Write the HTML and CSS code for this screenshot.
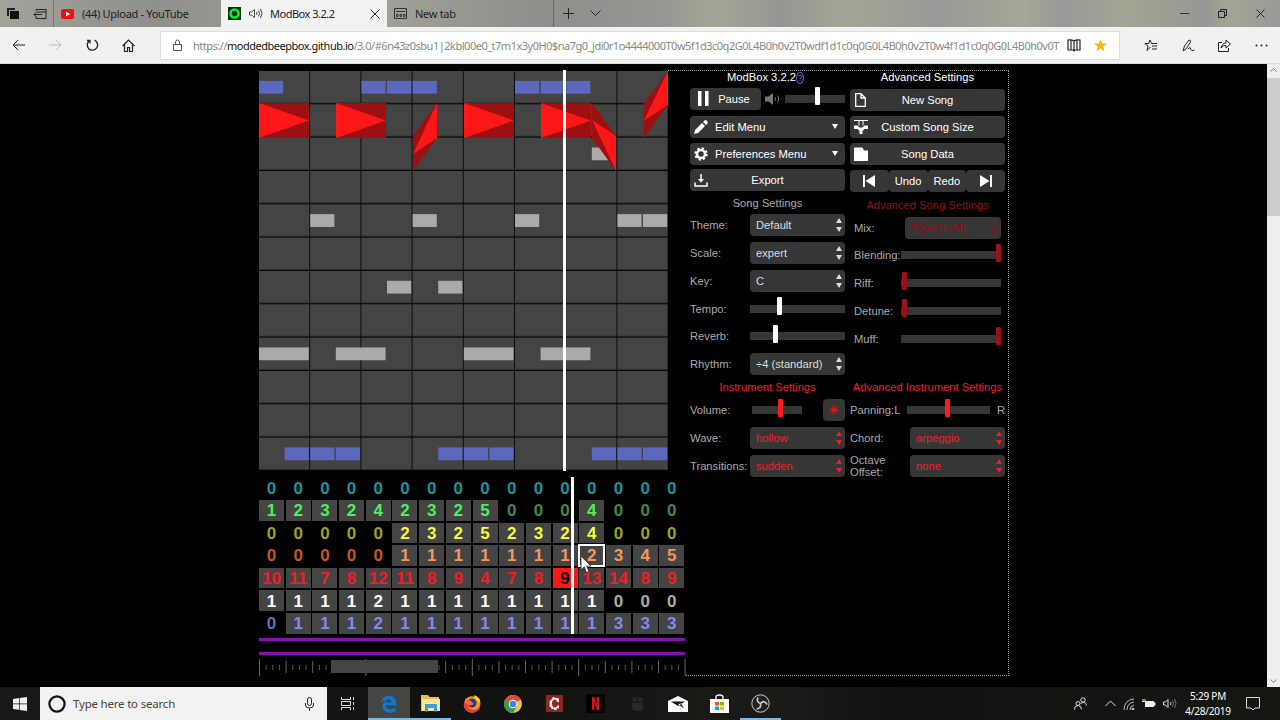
FILE: index.html
```html
<!DOCTYPE html>
<html lang="en">
  <head>
    <meta charset="UTF-8" />
    <meta name="viewport" content="width=device-width, initial-scale=1.0" />
    <title>ModBox 3.2.2</title>
    <link rel="stylesheet" href="styles.css">
  </head>

  <body>
    <header class="tabs">
      <div class="tab-tools">
        <svg width="14" height="14" viewBox="0 0 14 14"><path d="M1 1h8v2H3v6H1z" fill="#222"/><path d="M4 4h9v8H4z" fill="#111"/></svg>
        <svg width="14" height="12" viewBox="0 0 14 12" fill="none" stroke="#222"><path d="M3 3V1.500h10v9H3V9M4 4h9M9 6.500H1M3.500 4L1 6.500 3.500 9"/></svg>
      </div>
      <div class="tab">
        <svg width="13" height="10" viewBox="0 0 13 10"><rect width="13" height="10" rx="2" fill="#e11"/><path d="M5 2.500l4 2.500-4 2.500z" fill="#fff"/></svg>
        <span class="tab-name">(44) Upload - YouTube</span>
      </div>
      <div class="tab current">
        <svg width="13" height="13" viewBox="0 0 13 13"><rect width="13" height="13" fill="#031"/><circle cx="6.500" cy="6.500" r="4" fill="none" stroke="#1bea2b" stroke-width="2.600"/></svg>
        <svg class="sound" width="14" height="11" viewBox="0 0 14 11" fill="none" stroke="#333" stroke-width=".9"><path d="M.5 4v3h2L5.500 9.500v-8L2.500 4zM7.500 4q1 1.500 0 3M9.500 2.500q2 3 0 6M11.500 1q3 4.500 0 9"/></svg>
        <span class="tab-name modbox">ModBox 3.2.2</span>
        <svg class="close" width="10" height="10" viewBox="0 0 10 10" stroke="#333"><path d="M.5.5l9 9M9.500.5l-9 9"/></svg>
      </div>
      <div class="tab last">
        <svg width="13" height="11" viewBox="0 0 13 11" fill="none" stroke="#333"><path d="M.5 10.500V.5h12v10zM2 3.500h9M2.500 6.500h1.500v2H2.500zM6 6.500h1.500v2H6zM9.500 6.500H11v2H9.500z"/></svg>
        <span class="tab-name">New tab</span>
      </div>
      <svg class="plus" width="11" height="11" viewBox="0 0 11 11" stroke="#222"><path d="M5.500 0v11M0 5.500h11"/></svg>
      <svg class="more" width="11" height="7" viewBox="0 0 11 7" fill="none" stroke="#222"><path d="M.5.5l5 5 5-5"/></svg>
      <div class="window-buttons">
        <svg width="9" height="9" viewBox="0 0 9 9" stroke="#333"><path d="M0 4.500h9"/></svg>
        <svg width="9" height="9" viewBox="0 0 9 9" fill="none" stroke="#222"><path d="M.5 2.500h6v6h-6zM2.500 2V.5h6v6H7"/></svg>
        <svg width="9" height="9" viewBox="0 0 9 9" stroke="#222"><path d="M.5.5l8 8M8.500.5l-8 8"/></svg>
      </div>
    </header>

    <nav class="toolbar">
      <svg class="back" width="13" height="12" viewBox="0 0 13 12" fill="none" stroke="#222"><path d="M13 6H1M6 1L1 6l5 5"/></svg>
      <svg class="forward" width="13" height="12" viewBox="0 0 13 12" fill="none" stroke="#bbb"><path d="M0 6h12M7 1l5 5-5 5"/></svg>
      <svg class="refresh" width="13" height="14" viewBox="0 0 13 14" fill="none" stroke="#222" stroke-width="1.300"><path d="M8.500 2.200A5.200 5.200 0 1 1 3.500 2.700M1 2.500h3v3"/></svg>
      <svg class="home" width="13" height="13" viewBox="0 0 13 13" fill="none" stroke="#222" stroke-width="1.200"><path d="M.5 7l6-6 6 6M2.500 5.500v7h3v-4h2v4h3v-7"/></svg>
      <div class="address">
        <svg width="9" height="12" viewBox="0 0 9 12" fill="none" stroke="#555"><path d="M.5 5.500h8v6h-8zM2.500 5.500V3a2 2 0 0 1 4 0v2.500"/></svg>
        <span class="url">https://<b>moddedbeepbox.github.io</b>/3.0/#6n43z0sbu1|2kbl00e0_t7m1x3y0H0$na7g0_jdi0r1o4444000T0w5f1d3c0q2G0L4B0h0v2T0wdf1d1c0q0G0L4B0h0v2T0w4f1d1c0q0G0L4B0h0v0T</span>
        <svg class="book" width="14" height="13" viewBox="0 0 14 13" fill="none" stroke="#222" stroke-width="1.200"><path d="M7 2v10M7 2Q5 .5 1 1v10h5l1 1 1-1h5V1Q9 .5 7 2M4 1v10M10 1v10"/></svg>
        <svg width="13" height="13" viewBox="0 0 13 13"><path d="M6.500 0l1.700 4.600H13L9.200 7.500l1.400 5-4.100-3-4.100 3 1.400-5L0 4.600h4.800z" fill="#f7b614"/></svg>
      </div>
      <div class="actions">
        <svg width="14" height="13" viewBox="0 0 14 13" fill="none" stroke="#222"><path d="M6.500 8L3 11.500l1-4.500L.8 4.500h3.900L6 1l1.500 3.500H13M8 7h5M8 10h5"/></svg>
        <svg width="13" height="13" viewBox="0 0 13 13" fill="none" stroke="#222"><path d="M1 12l1.500-5L7 1q2 0 1.500 2L4 10l-3 2M6 10q3-3 2.500 0 1 3 4 1"/></svg>
        <svg width="13" height="13" viewBox="0 0 13 13" fill="none" stroke="#222"><path d="M4 3.500H.5v9h10V9M3 9q1-5 5-5V1l4.500 4L8 9V6.500Q5 6 3 9z"/></svg>
        <svg width="13" height="13" viewBox="0 0 13 13" fill="#222"><circle cx="1.500" cy="6.500" r="1"/><circle cx="6.500" cy="6.500" r="1"/><circle cx="11.500" cy="6.500" r="1"/></svg>
      </div>
    </nav>

    <main class="page">
      <section class="editor">
        <div class="pattern">
          <svg width="410" height="400" viewBox="0 0 410 400">
            <defs>
              <pattern id="cell" width="51.200" height="33.330" patternUnits="userSpaceOnUse">
                <rect width="50.300" height="32" fill="#444"/>
              </pattern>
            </defs>
            <rect width="409" height="399" fill="#050505"/>
            <rect width="409" height="399" fill="url(#cell)"/>
            <g id="notes"></g>
            <g fill="#9b1010">
              <path d="M0 32h50v35H0zM77 32h50v35H77zM205 32h50v35h-50zM282 32h50v35h-50zM154 65l24-33v35l-24 33zM333 32l24 33v35l-24-33zM384.500 33L409 0v34l-24.500 33z"/>
            </g>
            <g fill="#ff1616">
              <path d="M0 32l50 17.500L0 67zM77 32l50 17.500L77 67zM205 32l50 17.500L205 67zM282 32l50 17.500L282 67zM154 83l24-51v35zM333 49l24 16v35zM384.500 50L409 0v34z"/>
            </g>
          </svg>
          <div class="playhead"></div>
        </div>

        <div class="tracks">
          <div class="cells" id="cells"></div>
          <div class="playhead"></div>
          <svg class="cursor" width="13" height="19" viewBox="0 0 13 19"><path d="M1 1v14l3.200-3 2.300 5.500 2.500-1-2.300-5.300H11z" fill="#fff" stroke="#222" stroke-width=".8"/></svg>
        </div>
        <div class="loop"></div>
        <svg class="timeline" id="timeline" width="427" height="20" viewBox="0 0 427 20"></svg>
      </section>

      <section class="settings">
        <div class="column">
          <div class="song">
            <h2 class="title">ModBox 3.2.2<span class="help">?</span></h2>
            <div class="row play">
              <button class="pause"><svg width="11" height="15" viewBox="0 0 11 15" fill="#fff"><path d="M0 0h3.500v15H0zM7 0h3.500v15H7z"/></svg>Pause</button>
              <svg width="16" height="12" viewBox="0 0 16 12"><path d="M0 3.500h3.500L8 0v12L3.500 8.500H0z" fill="#777"/><path d="M10 4q1 2 0 4M12.500 2.500q2.500 3.500 0 7" fill="none" stroke="#777"/></svg>
              <div class="slider white" style="--pos: 54%"></div>
            </div>
            <div class="row menu"><button class="left"><svg width="14" height="14" viewBox="0 0 14 14" fill="#fff"><path d="M0 14l1-4 7-7 3 3-7 7zM9 2l1.500-1.500q1-.8 2 0l1 1q.8 1 0 2L12 5z"/></svg>Edit Menu<i class="drop"></i></button></div>
            <div class="row menu"><button class="left"><svg width="14" height="14" viewBox="0 0 14 14" fill="none" stroke="#fff"><circle cx="7" cy="7" r="4" stroke-width="2.500"/><circle cx="7" cy="7" r="5.600" stroke-width="2.200" stroke-dasharray="2.200 2.200"/></svg>Preferences Menu<i class="drop"></i></button></div>
            <div class="row menu"><button><svg width="14" height="13" viewBox="0 0 14 13" fill="none" stroke="#fff" stroke-width="1.500"><path d="M1 8.500V12h12V8.500M7 0v7"/><path d="M4 5h6L7 8.500z" fill="#fff" stroke="none"/></svg>Export</button></div>
            <h2 class="heading">Song Settings</h2>
            <div class="row"><label>Theme:</label><div class="select">Default</div></div>
            <div class="row"><label>Scale:</label><div class="select">expert</div></div>
            <div class="row"><label>Key:</label><div class="select">C</div></div>
            <div class="row"><label>Tempo:</label><div class="slider white" style="--pos: 31%"></div></div>
            <div class="row"><label>Reverb:</label><div class="slider white" style="--pos: 27%"></div></div>
            <div class="row"><label>Rhythm:</label><div class="select">÷4 (standard)</div></div>
          </div>
          <div class="instrument">
            <h2 class="heading">Instrument Settings</h2>
            <div class="row volume"><label>Volume:</label><div class="slider" style="--pos: 57%"></div><button class="record"><svg width="10" height="10" viewBox="0 0 10 10" fill="none" stroke="#e11"><circle cx="5" cy="5" r="3.800" stroke-dasharray="2 .8"/><circle cx="5" cy="5" r="2.200" fill="#e11"/></svg></button></div>
            <div class="row"><label>Wave:</label><div class="select">hollow</div></div>
            <div class="row"><label>Transitions:</label><div class="select">sudden</div></div>
          </div>
        </div>

        <div class="column advanced">
          <div class="song">
            <h2 class="title">Advanced Settings</h2>
            <div class="row menu"><button><svg class="file" width="11" height="14" viewBox="0 0 11 14" fill="none" stroke="#fff" stroke-width="1.300"><path d="M.7.7H6L10.300 5v8.300H.7zM6 1v4h4"/></svg>New Song</button></div>
            <div class="row menu"><button><svg width="14" height="14" viewBox="0 0 14 14" fill="#fff"><path d="M0 0h14v1H0zM4.500 1h1v4.500h-1zM8.500 1h1v4.500h-1zM0 5.500h3.500l2 2h3l2-2H14V9h-3.500L8.500 11v3h-3v-3l-2-2H0z"/></svg>Custom Song Size</button></div>
            <div class="row menu"><button><svg width="14" height="14" viewBox="0 0 14 14" fill="#fff"><path d="M0 .5h8.500L10 3.500h4V14H0z"/></svg>Song Data</button></div>
            <div class="row nav">
              <button><svg width="12" height="12" viewBox="0 0 12 12" fill="#fff"><path d="M0 0h2v12H0zM12 0v12L2.500 6z"/></svg></button>
              <button>Undo</button>
              <button>Redo</button>
              <button><svg width="12" height="12" viewBox="0 0 12 12" fill="#fff"><path d="M10 0h2v12h-2zM0 0v12l9.500-6z"/></svg></button>
            </div>
            <h2 class="heading">Advanced Song Settings</h2>
            <div class="mods">
              <div class="row"><label>Mix:</label><div class="select">Type B (M)</div></div>
              <div class="row"><label>Blending:</label><div class="slider" style="--pos: 97%"></div></div>
              <div class="row"><label>Riff:</label><div class="slider" style="--pos: 3%"></div></div>
              <div class="row"><label>Detune:</label><div class="slider" style="--pos: 3%"></div></div>
              <div class="row"><label>Muff:</label><div class="slider" style="--pos: 97%"></div></div>
            </div>
          </div>
          <div class="instrument">
            <h2 class="heading">Advanced Instrument Settings</h2>
            <div class="row panning"><label>Panning:L</label><div class="slider" style="--pos: 49%"></div><label>R</label></div>
            <div class="row"><label>Chord:</label><div class="select">arpeggio</div></div>
            <div class="row"><label>Octave Offset:</label><div class="select">none</div></div>
          </div>
        </div>
      </section>

      <div class="scrollbar">
        <svg width="7" height="4" viewBox="0 0 7 4" fill="none" stroke="#777"><path d="M.5 3.500l3-3 3 3"/></svg>
        <div class="scroll-thumb"></div>
        <svg width="7" height="4" viewBox="0 0 7 4" fill="none" stroke="#777"><path d="M.5.5l3 3 3-3"/></svg>
      </div>
    </main>

    <footer class="taskbar">
      <div class="start"><svg width="14" height="14" viewBox="0 0 14 14" fill="#eee"><path d="M0 2l6-.9v5.500H0zM6.700 1L14 0v6.600H6.700zM0 7.300h6v5.500L0 12zM6.700 7.300H14V14l-7.300-1z"/></svg></div>
      <div class="search">
        <svg width="18" height="18" viewBox="0 0 18 18"><circle cx="9" cy="9" r="7.600" fill="none" stroke="#111" stroke-width="2.200"/></svg>
        <span>Type here to search</span>
        <svg width="9" height="14" viewBox="0 0 9 14" fill="none" stroke="#222"><rect x="2.500" y=".5" width="4" height="8" rx="2"/><path d="M.5 6v2q0 3 4 3t4-3V6M4.500 11v3"/></svg>
      </div>
      <div class="apps">
        <div class="app"><svg width="14" height="13" viewBox="0 0 14 13" fill="none" stroke="#ddd"><path d="M.5 0v2.500h9V0M.5 4.500h9v4h-9zM.5 13v-2.500h9V13M12.500 0v3M12.500 5v3M12.500 10v3"/></svg></div>
        <div class="app active"><svg width="17" height="18" viewBox="0 0 17 18"><path d="M1 8Q2 1 9 .7q7 0 7.500 9.500H5.500q.4 4 5 4 2.700 0 5-1.400v3.500Q13 18 9.500 17.700 3 17 2.500 11 3 7 6.500 5 3 5 1 8zM5.800 7.500h5.500q0-3.200-2.700-3.200T5.800 7.500z" fill="#0b7bd8"/></svg></div>
        <div class="app open"><svg width="19" height="17" viewBox="0 0 19 17"><path d="M0 0h7l1.500 2H18v14H0z" fill="#e9bd51"/><path d="M1 4h18v12H1z" fill="#ffe38f"/><path d="M4 9h12v7.500h-3V13H7v3.500H4z" fill="#37a3dd"/></svg></div>
        <div class="app"><svg width="18" height="18" viewBox="0 0 18 18"><circle cx="9" cy="9.500" r="8.200" fill="#ff9718"/><path d="M1 7Q0 17 9 17.700q8-.7 8.500-8-3 5.500-7.500 5Q4 14 4.500 9z" fill="#f33149"/><circle cx="9" cy="8" r="4.500" fill="#173d9a"/><path d="M2 3q3 3 6 3l3 3-4 2Q2 9 2 3z" fill="#ff6723"/><path d="M11 0q7 2 6.500 10-1-4-4-5Q11 3 11 0z" fill="#ffd43b"/></svg></div>
        <div class="app"><svg width="18" height="18" viewBox="0 0 18 18"><circle cx="9" cy="9" r="9" fill="#eac33c"/><path d="M9 9L1.200 4.500a9 9 0 0 1 15.600 0z" fill="#dd493b"/><path d="M9 9L1.200 4.500A9 9 0 0 0 9 18l4-7z" fill="#399b50"/><circle cx="9" cy="9" r="4.300" fill="#fff"/><circle cx="9" cy="9" r="3.300" fill="#4381e8"/></svg></div>
        <div class="app"><svg width="17" height="17" viewBox="0 0 17 17"><rect width="17" height="17" fill="#8d2622"/><path d="M13 3.500V7h-2q0-2.500-2-2.500-3 0-3 4t3 4q2 0 2-2h2v3l-2-.5-.5 2H8l-.3-1.300-2 .5-.9-2-1.500-1 .5-2.200-.5-1.500.8-2 1.500-1L7 2l2 .7z" fill="#eee"/></svg></div>
        <div class="app"><svg width="19" height="19" viewBox="0 0 19 19"><rect width="19" height="19" fill="#030303"/><path d="M6 3h2.500l2.200 8V3H13v13h-2.300L8.300 8.500V16H6z" fill="#d4101c"/></svg></div>
        <div class="app"><svg width="14" height="16" viewBox="0 0 14 16"><rect x="2" y="1" width="11" height="14" rx="4" fill="#292929"/><path d="M2 6h11M7.500 1v5" stroke="#111"/></svg></div>
        <div class="app"><svg width="20" height="16" viewBox="0 0 20 16"><path d="M0 5l10-5 10 5v11H0z" fill="#fff"/><path d="M3 5.500h14l-7 4.500zM10 8l6 4.500-3-5z" fill="#111"/></svg></div>
        <div class="app"><svg width="19" height="19" viewBox="0 0 19 19"><path d="M0 5h19v14H0z" fill="#fff"/><path d="M6 6V3q0-2 3.500-2T13 3v3" fill="none" stroke="#fff" stroke-width="1.300"/><path d="M5 8h4v3.500H5z" fill="#f25022"/><path d="M10 8h4v3.500h-4z" fill="#7fba00"/><path d="M5 12.500h4V16H5z" fill="#00a4ef"/><path d="M10 12.500h4V16h-4z" fill="#ffb900"/></svg></div>
        <div class="app open"><svg width="19" height="19" viewBox="0 0 19 19" fill="none" stroke="#ccc"><circle cx="9.500" cy="9.500" r="8.700" fill="#222"/><path d="M9.500 9.500Q5 8 7 3.500M9.500 9.500q4-4 6.500 1M9.500 9.500q1 5-4 5.500" stroke-width="1.700"/></svg></div>
      </div>
      <div class="tray">
        <svg width="13" height="13" viewBox="0 0 13 13" fill="none" stroke="#ddd"><circle cx="9" cy="3" r="2.200"/><circle cx="4" cy="6.500" r="2"/><path d="M.5 12.500q0-4 3.500-4t3.500 4M6.500 6.500q5-3 6 2"/></svg>
        <svg width="11" height="7" viewBox="0 0 11 7" fill="none" stroke="#ddd"><path d="M.5 6l5-5 5 5"/></svg>
        <svg width="12" height="12" viewBox="0 0 12 12" fill="none" stroke="#bbb"><path d="M1 12Q1 2 11 1M4 12q0-7 7-8M7 12q0-4 4-5"/><circle cx="10" cy="11" r="1" fill="#ddd"/></svg>
        <svg width="14" height="11" viewBox="0 0 14 11"><path d="M3 3h9v1.500h1.500v3H12V9H3z" fill="#eee"/><path d="M1 1v2M3 1v2M0 3.500h4" stroke="#ddd"/></svg>
        <svg width="14" height="11" viewBox="0 0 14 11" fill="none" stroke="#ddd"><path d="M.5 4v3h2L5 9.500v-8L2.500 4zM7.500 4q1 1.500 0 3"/><path d="M9.500 2.500q2 3 0 6M11.500 1q3 4.500 0 9" stroke="#777"/></svg>
      </div>
      <div class="clock"><span>5:29 PM</span><span>4/28/2019</span></div>
      <svg class="notice" width="14" height="14" viewBox="0 0 14 14" fill="none" stroke="#ddd"><path d="M.5.5h13v10.500H9l-2 2-2-2H.5z"/></svg>
    </footer>

    <script>
      const SVG = "http://www.w3.org/2000/svg";
      const STEP = 25.6;
      const PITCH = 33.33;

      // [row, step, length in steps, kind]
      const NOTES = [
        [0, 0, 1, "drum"], [0, 4, 1, "drum"], [0, 5, 1, "drum"], [0, 6, 1, "drum"],
        [0, 10, 1, "drum"], [0, 11, 1, "drum"], [0, 12, 1, "drum"],
        [2, 13, 1, "ghost"],
        [4, 2, 1, "ghost"], [4, 6, 1, "ghost"], [4, 10, 1, "ghost"], [4, 14, 1, "ghost"], [4, 15, 1, "ghost"],
        [6, 5, 1, "ghost"], [6, 7, 1, "ghost"],
        [8, 0, 2, "ghost"], [8, 3, 2, "ghost"], [8, 8, 2, "ghost"], [8, 11, 2, "ghost"],
        [11, 1, 1, "drum"], [11, 2, 1, "drum"], [11, 3, 1, "drum"],
        [11, 7, 1, "drum"], [11, 8, 1, "drum"], [11, 9, 1, "drum"],
        [11, 13, 1, "drum"], [11, 14, 1, "drum"], [11, 15, 1, "drum"],
      ];

      const TRACKS = [
        ["cyan", "0 0 0 0 0 0 0 0 0 0 0 0 0 0 0 0"],
        ["green", "1 2 3 2 4 2 3 2 5 0 0 0 4 0 0 0"],
        ["yellow", "0 0 0 0 0 2 3 2 5 2 3 2 4 0 0 0"],
        ["orange", "0 0 0 0 0 1 1 1 1 1 1 1 2 3 4 5"],
        ["red", "10 11 7 8 12 11 8 9 4 7 8 9 13 14 8 9"],
        ["gray", "1 1 1 1 2 1 1 1 1 1 1 1 1 0 0 0"],
        ["blue", "0 1 1 1 2 1 1 1 1 1 1 1 1 3 3 3"],
      ];

      function addRect(parent, x, y, width, height, className) {
        const rect = document.createElementNS(SVG, "rect");
        rect.setAttribute("x", x);
        rect.setAttribute("y", y);
        rect.setAttribute("width", width);
        rect.setAttribute("height", height);
        rect.setAttribute("class", className);
        parent.appendChild(rect);
      }

      const notes = document.getElementById("notes");
      NOTES.forEach(([row, step, length, kind]) => {
        addRect(notes, step * STEP, row * PITCH + 9.8, length * STEP - 1.4, 12.8, kind);
      });

      const cells = document.getElementById("cells");
      TRACKS.forEach(([color, bars], channel) => {
        bars.split(" ").forEach((value, bar) => {
          const cell = document.createElement("div");
          cell.className = "cell " + color;
          if (value === "0") cell.classList.add("empty");
          if (channel === 4 && bar === 11) cell.classList.add("selected");
          if (channel === 3 && bar === 12) cell.classList.add("hover");
          cell.textContent = value;
          cells.appendChild(cell);
        });
      });

      const timeline = document.getElementById("timeline");
      for (let i = 0; i <= 64; i++) {
        const x = i * 6.65;
        if (i % 16 === 0) addRect(timeline, x, 1, 1, 17, "tick");
        else if (i % 4 === 0) addRect(timeline, x, 3, 1, 12, "tick");
        else addRect(timeline, x, 7, 1, 5, "tick small");
      }
      addRect(timeline, 72, 2, 107, 13, "visible-bars");
    </script>
  </body>
</html>
```
FILE: styles.css
```css
* {
  box-sizing: border-box;
}

body {
  margin: 0;
  width: 1280px;
  height: 720px;
  overflow: hidden;
  display: flex;
  flex-direction: column;
  background: #000;
  font-family: "Liberation Sans", Arial, sans-serif;
  font-size: 11.2px;
}

svg {
  flex: none;
  display: block;
}

/* browser */

.tabs {
  height: 27px;
  display: flex;
  align-items: center;
  background: linear-gradient(90deg, #a3a39a, #8f8f8c 12%, #a4a59a 27%, #8e8e8b 43%, #999794 52%, #a4a695 56%, #979593 61%, #a4a695 66%, #9a9896 73%, #a5a797 80%, #9a9896 83%, #a3a593 88%, #989694 94%, #a3a495 96%, #9a9896);
  font-family: "Noto Sans", "Open Sans", sans-serif;
  font-size: 11px;
  color: #222;
}

.tab-tools {
  width: 54px;
  height: 100%;
  padding-left: 6px;
  display: flex;
  align-items: center;
  gap: 13px;
  border-right: 1px solid #777;
}

.tab {
  width: 167px;
  height: 100%;
  padding: 0 7px;
  display: flex;
  align-items: center;
  gap: 8px;
}

.tab.current {
  width: 166px;
  background: #f2f2f2;
}

.tab.last {
  border-right: 1px solid #666;
}

.tab-name {
  white-space: nowrap;
  letter-spacing: -0.3px;
}

.modbox {
  letter-spacing: -0.5px;
}

.sound {
  margin-right: -1px;
}

.close {
  margin-left: auto;
}

.plus {
  margin-left: 9px;
}

.more {
  margin-left: 16px;
}

.window-buttons {
  margin-left: auto;
  margin-right: 15px;
  display: flex;
  gap: 29px;
}

.toolbar {
  height: 37px;
  display: flex;
  align-items: center;
  background: #f1f1f1;
  border-bottom: 1px solid #ddd;
}

.back {
  margin-left: 12px;
}

.forward {
  margin-left: 24px;
}

.refresh {
  margin-left: 24px;
}

.home {
  margin-left: 23px;
}

.address {
  width: 960px;
  height: 29px;
  margin-left: 25px;
  padding: 0 12px;
  display: flex;
  align-items: center;
  background: #fff;
  border: 1px solid #ddd;
}

.url {
  width: 867px;
  margin-left: 11px;
  white-space: nowrap;
  font-family: "Noto Sans", "Open Sans", sans-serif;
  font-size: 11px;
  letter-spacing: -0.49px;
  color: #888;
}

.url b {
  font-weight: normal;
  color: #111;
}

.book {
  margin: 0 13px 0 7px;
}

.actions {
  margin-left: 24px;
  display: flex;
  gap: 23.5px;
}

/* page */

.page {
  height: 623px;
  padding: 6px 0 0 259px;
  display: flex;
  background: #000;
}

.editor {
  width: 409px;
  padding-top: 1px;
  z-index: 1;
}

.pattern {
  position: relative;
  height: 400px;
}

.playhead {
  position: absolute;
  width: 3px;
  background: #fff;
}

.pattern .playhead {
  left: 304px;
  top: -1px;
  height: 401px;
}

.drum {
  fill: #5b68bd;
}

.ghost {
  fill: #aaa;
}

.tracks {
  position: relative;
  width: 427px;
  margin-top: 6.5px;
}

.cells {
  display: grid;
  grid-template-columns: repeat(16, 25px);
  grid-auto-rows: 20.6px;
  column-gap: 1.7px;
  row-gap: 2px;
}

.cell {
  display: flex;
  align-items: center;
  justify-content: center;
  padding-top: 1.6px;
  background: #444;
  font-size: 17px;
  font-weight: bold;
}

.cell.empty {
  background: none;
}

.cyan { color: #1c949b; }
.green { color: #50ef5b; }
.green.empty { color: #408944; }
.yellow { color: #f8f840; }
.yellow.empty { color: #a2a023; }
.orange { color: #f5975a; }
.orange.empty { color: #c45721; }
.red { color: #f01d25; }
.gray { color: #fff; }
.gray.empty { color: #aaa; }
.blue { color: #808cf2; }
.blue.empty { color: #606cb8; }

.cell.selected {
  background: #ff1616;
  color: #000;
}

.cell.hover {
  outline: 2px solid #fff;
  outline-offset: -1px;
}

.tracks .playhead {
  left: 312px;
  top: -1px;
  height: 157px;
}

.cursor {
  position: absolute;
  left: 321px;
  top: 77px;
}

.loop {
  width: 426px;
  height: 17px;
  margin-top: 4px;
  border: solid #8a0db3;
  border-width: 3px 0;
}

.timeline {
  width: 427px;
  height: 24px;
  padding-bottom: 4px;
  margin-top: 3px;
  background: #000;
}

.tick {
  fill: #666;
}

.tick.small {
  fill: #555;
}

.visible-bars {
  fill: #444;
}

.settings {
  width: 341px;
  height: 606px;
  padding-left: 22px;
  display: flex;
  gap: 5px;
  border: 1px dotted #999;
  border-left: 0;
}

.column {
  width: 155px;
  flex: none;
  margin-top: -1px;
  color: #aaa;
}

.song {
  height: 308.8px;
}

h2 {
  margin: 0;
  font-size: 11.2px;
  font-weight: normal;
  text-align: center;
  white-space: nowrap;
}

.title {
  height: 14px;
  line-height: 14px;
  color: #fff;
}

.column:not(.advanced) .title {
  padding-right: 4px;
}

.help {
  display: inline-block;
  width: 8px;
  height: 12px;
  line-height: 12px;
  border-radius: 50%;
  box-shadow: inset 0 0 0 1px #6a5be0;
  color: #7a6bf0;
  font-size: 9px;
}

.heading {
  height: 17.4px;
  line-height: 18px;
}

.row {
  height: 27.8px;
  display: flex;
  align-items: center;
}

.row label {
  width: 60px;
  flex: none;
}

.row.play {
  height: 29.5px;
  gap: 4px;
}

.row.menu,
.row.nav {
  height: 26.8px;
}

button {
  position: relative;
  width: 100%;
  height: 22px;
  padding: 0;
  display: flex;
  align-items: center;
  justify-content: center;
  border: 0;
  border-radius: 4px;
  background: #363636;
  color: #fff;
  font: inherit;
}

.menu button svg {
  position: absolute;
  left: 4px;
}

.menu button .file {
  left: 5px;
}

button.left {
  justify-content: flex-start;
  padding-left: 25px;
}

button.pause {
  width: 71px;
  gap: 9px;
  padding-right: 3px;
}

.drop {
  margin-left: auto;
  margin-right: 7px;
  border: 3.5px solid transparent;
  border-top: 5px solid #fff;
  border-bottom: 0;
}

.select {
  position: relative;
  width: 95px;
  height: 22px;
  line-height: 22px;
  padding-left: 6px;
  border-radius: 4px;
  background: #363636;
  color: #ddd;
}

.select::before,
.select::after {
  content: "";
  position: absolute;
  right: 3px;
  border: 3.5px solid transparent;
}

.select::before {
  top: 4px;
  border-top: 0;
  border-bottom: 5px solid;
}

.select::after {
  bottom: 4px;
  border-bottom: 0;
  border-top: 5px solid;
}

.slider {
  --thumb: #ff1a1f;
  position: relative;
  width: 95px;
  height: 8px;
  background: #363636;
}

.slider::after {
  content: "";
  position: absolute;
  left: calc(var(--pos) - 2.5px);
  top: -7.5px;
  width: 5px;
  height: 18px;
  border-radius: 1px;
  background: var(--thumb);
}

.slider.white {
  --thumb: #fff;
}

.play .slider {
  width: 60px;
}

.instrument .heading {
  line-height: 17.4px;
}

.instrument .heading,
.instrument .select {
  color: #f51d25;
}

.volume .slider {
  width: 50px;
  margin-left: 2px;
}

.volume .record {
  width: 22px;
  margin-left: auto;
}

.advanced .title {
  margin-bottom: 3px;
}

.nav button {
  width: 38.75px;
}

.advanced .song .heading {
  height: 19.5px;
  line-height: 23px;
  color: #92101a;
}

.mods {
  padding: 0 4px;
}

.mods .row label {
  width: 47px;
}

.mods .row .slider {
  --thumb: #9c1118;
  width: 100px;
}

.mods .select {
  width: 96px;
  margin-left: 4px;
  color: #92101a;
}

.panning label {
  width: 57px;
}

.panning .slider {
  width: 83px;
}

.panning label:last-child {
  width: auto;
  margin-left: 7px;
}

.scrollbar {
  width: 13px;
  height: 623px;
  margin: -6px 0 0 auto;
  padding: 4px 0;
  display: flex;
  flex-direction: column;
  align-items: center;
  background: #efefef;
}

.scroll-thumb {
  width: 13px;
  height: 138px;
  margin: 6px 0 auto;
  background: #cdcdcd;
}

/* taskbar */

.taskbar {
  height: 33px;
  display: flex;
  align-items: center;
  background: linear-gradient(90deg, #181916, #11120f 40%, #1b1c18 60%, #11120f 70%, #161713);
  font-family: "Noto Sans", "Open Sans", sans-serif;
}

.start {
  width: 40px;
  display: flex;
  justify-content: center;
}

.search {
  width: 287px;
  height: 33px;
  padding: 0 13px 0 8px;
  display: flex;
  align-items: center;
  background: #f2f2f2;
  color: #444;
  font-size: 11.5px;
  letter-spacing: -0.2px;
}

.search span {
  margin: 0 auto 0 7px;
}

.apps {
  display: flex;
}

.app {
  width: 41.3px;
  height: 33px;
  display: flex;
  align-items: center;
  justify-content: center;
}

.app.active {
  background: #444642;
}

.app.active,
.app.open {
  box-shadow: inset 0 -2px #76b9ed;
}

.tray {
  margin-left: auto;
  display: flex;
  align-items: center;
  gap: 7px;
}

.tray svg:first-child {
  margin-right: 11px;
}

.clock {
  width: 62px;
  display: flex;
  flex-direction: column;
  align-items: center;
  line-height: 15px;
  color: #fff;
  font-size: 10px;
  letter-spacing: -0.2px;
}

.notice {
  margin: 0 20px 0 7px;
}
```
